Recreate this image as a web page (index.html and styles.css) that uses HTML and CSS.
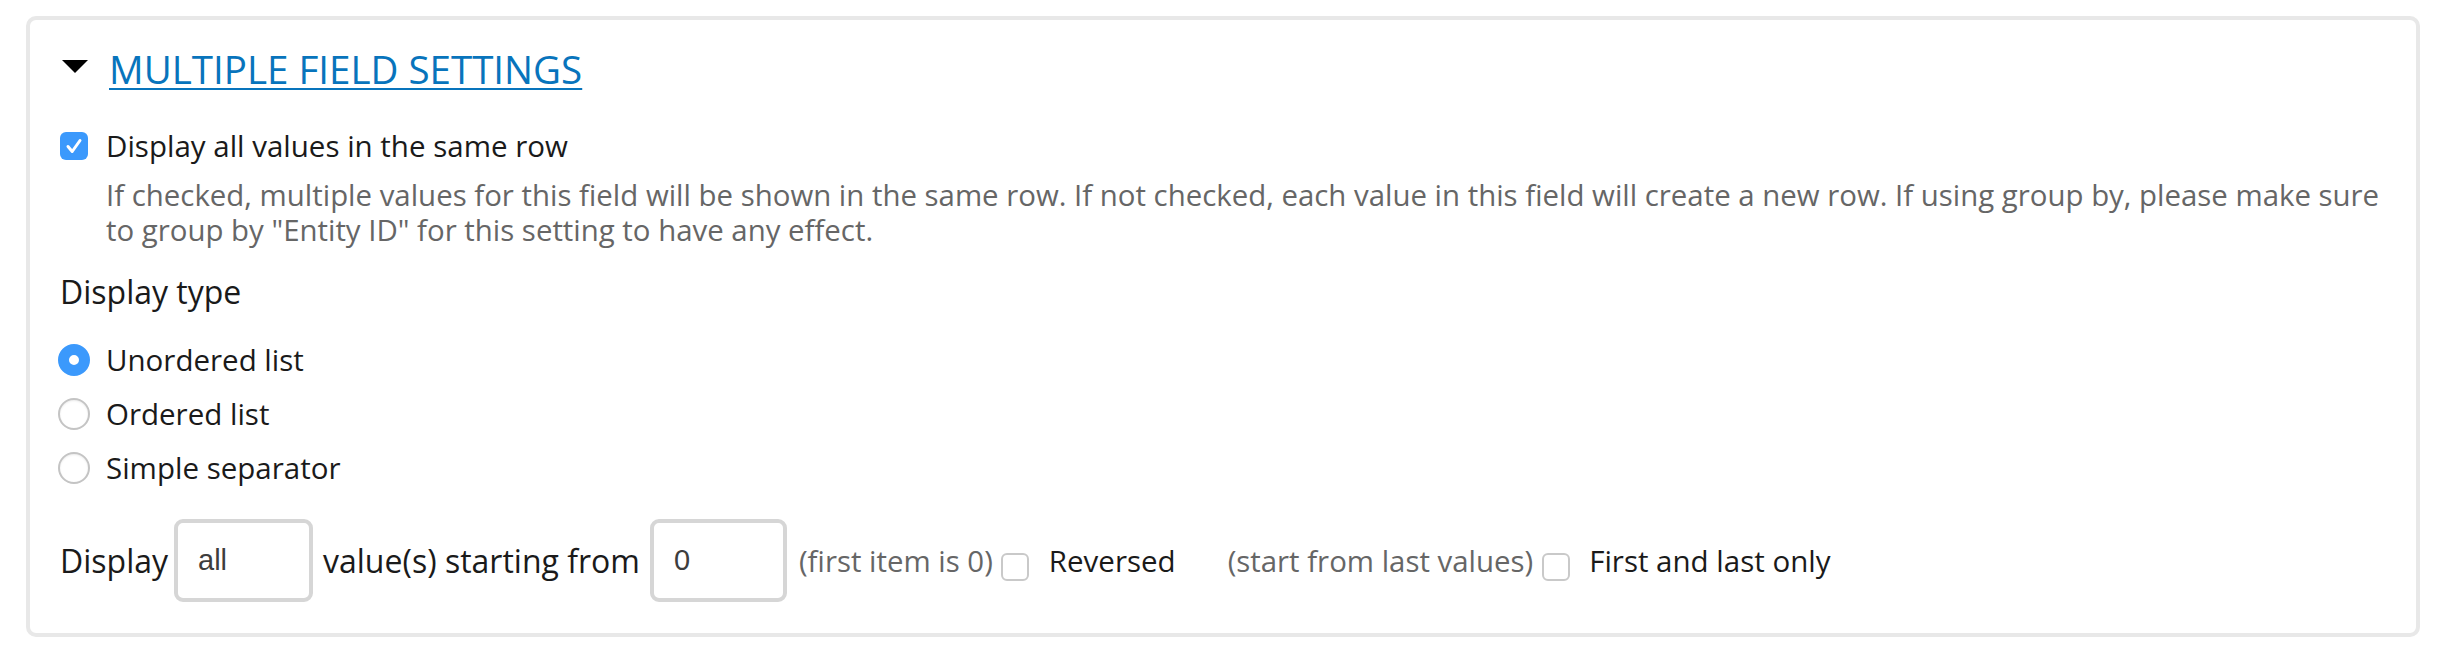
FILE: index.html
```html
<html>
  <head>
    <title>Multiple field settings</title>
    <link rel="stylesheet" href="styles.css">
  </head>
  <body>
    <div class="fieldset">
      <div class="legend">
        <span class="arrow"></span>
        <a class="title" href="#">MULTIPLE FIELD SETTINGS</a>
      </div>

      <div class="form-item single">
        <label class="option">
          <span class="checkbox checked">
            <svg viewBox="0 0 28 28" width="28" height="28">
              <path d="M8 14.5 L12.2 19.5 L20 8.5" fill="none" stroke="#fff" stroke-width="3" stroke-linecap="round" stroke-linejoin="round"/>
            </svg>
          </span>
          Display all values in the same row
        </label>
        <div class="description">
          If checked, multiple values for this field will be shown in the same row. If not checked, each value in this field will create a new row. If using group by, please make sure to group by "Entity ID" for this setting to have any effect.
        </div>
      </div>

      <div class="form-item radios">
        <div class="label">Display type</div>
        <label class="option radio-row"><span class="radio checked"></span>Unordered list</label>
        <label class="option radio-row"><span class="radio"></span>Ordered list</label>
        <label class="option radio-row"><span class="radio"></span>Simple separator</label>
      </div>

      <div class="form-item inline">
        <span class="txt big">Display</span>
        <input class="box first" type="text" value="all">
        <span class="txt big after-first">value(s) starting from</span>
        <input class="box second" type="text" value="0">
        <span class="hint first-hint">(first item is 0)</span>
        <span class="checkbox small"></span>
        <span class="txt rev">Reversed</span>
        <span class="hint last-hint">(start from last values)</span>
        <span class="checkbox small"></span>
        <span class="txt fl">First and last only</span>
      </div>
    </div>
  </body>
</html>
```

FILE: styles.css
```css
body {margin: 0; background-color: #fff; font-family: "Open Sans", "Noto Sans", sans-serif; color: #1a1a1a;}

.fieldset {
  margin: 16px 22px 15px 26px;
  border: 4px solid #e8e8e8;
  border-radius: 10px;
  padding: 23px 30px 30px 30px;
  height: 621px;
  box-sizing: border-box;
}

.legend {display: flex; align-items: center; height: 52px;}
.arrow {
  width: 0; height: 0;
  margin: -6px 21px 0 2px;
  border-left: 13px solid transparent;
  border-right: 13px solid transparent;
  border-top: 13px solid #000;
}
.title {
  font-size: 38.5px;
  line-height: 52px;
  color: #0874bc;
  text-decoration: underline;
  text-decoration-thickness: 2px;
  text-underline-offset: 4px;
}

.form-item {font-size: 29.5px; line-height: 40px;}
.form-item.single {margin-top: 31px;}
.option {display: flex; align-items: center;}

.checkbox {
  display: inline-block;
  width: 28px; height: 28px;
  box-sizing: border-box;
  border-radius: 6px;
  margin-right: 18px;
  flex: none;
}
.checkbox svg {display: block;}
.checkbox.checked {background-color: #3b99fc;}
.checkbox.small {
  width: 28px; height: 28px;
  border: 2px solid #c9c9c9;
  border-radius: 6px;
  background: #fff;
  margin: 12px 0 0 0;
}

.description {
  font-size: 29.4px;
  line-height: 35px;
  color: #666;
  margin: 12px 0 0 46px;
}

.radios {margin-top: 24px;}
.radios .label {font-size: 32px; margin-bottom: 21px;}
.radio-row {height: 54px;}
.radio {
  width: 32px; height: 32px;
  box-sizing: border-box;
  border-radius: 50%;
  border: 2px solid #c4c4c4;
  background: #fff;
  box-shadow: inset 0 1px 2px rgba(0,0,0,0.08);
  margin: 0 16px 0 -2px;
  flex: none;
}
.radio.checked {
  border: 11px solid #3b99fc;
  box-shadow: none;
}

.inline {display: flex; align-items: center; margin-top: 24px; height: 83px;}
.big {font-size: 32px;}
.box {
  height: 83px;
  box-sizing: border-box;
  border: 4px solid #d6d6d6;
  border-radius: 9px;
  padding: 0 0 0 20px;
  font-family: "Liberation Sans", Arial, sans-serif;
  font-size: 29px;
  color: #3d3d3d;
  outline: none;
}
.box.first {width: 139px; margin-left: 6px;}
.box.second {width: 137px; margin-left: 10px;}
.after-first {margin-left: 10px;}
.hint {font-size: 29.4px; color: #666;}
.first-hint {margin: 0 8px 0 12px;}
.rev {margin-left: 20px;}
.last-hint {margin: 0 9px 0 52px;}
.fl {margin-left: 19px;}
```
